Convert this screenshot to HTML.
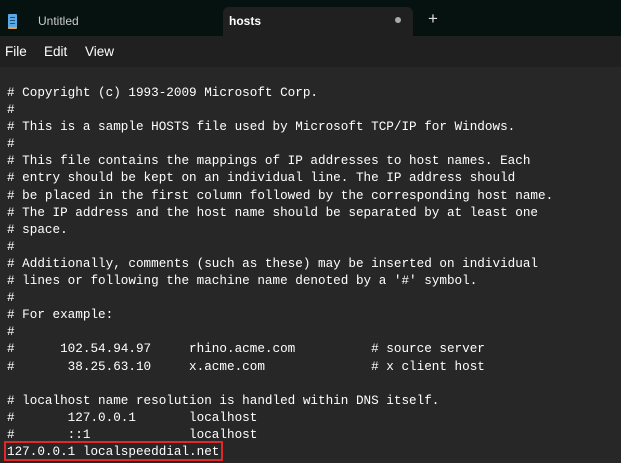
<!DOCTYPE html>
<html><head><style>
body{margin:0;width:621px;height:463px;overflow:hidden;background:#272727;font-family:"Liberation Sans",sans-serif;position:relative}
.tabbar{position:absolute;left:0;top:0;width:621px;height:36px;background:#061210}
.tab{position:absolute;left:223px;top:7px;width:190px;height:29px;background:#202020;border-radius:6px 6px 0 0}
.menu{position:absolute;left:0;top:36px;width:621px;height:31px;background:#202020;color:#fff;font-size:13.5px}
.menu span{position:absolute;top:8px}
pre{position:absolute;left:7px;top:84px;margin:0;font-family:"Liberation Mono",monospace;font-size:12.65px;line-height:17.1px;color:#fff}
.box{position:absolute;left:4px;top:441px;width:215px;height:16px;border:2px solid #e0282a}
</style></head><body>
<div class="tabbar">
<div style="position:absolute;left:8px;top:14px;width:9px;height:13px;background:#5aa9e6;border-radius:1px;border-bottom:2px solid #e8a040"></div>
<div style="position:absolute;left:10px;top:17px;width:5px;height:1px;background:#1c4f80;box-shadow:0 3px #1c4f80,0 6px #1c4f80"></div>
<div style="position:absolute;left:38px;top:14px;color:#ccc;font-size:12px">Untitled</div>
<div class="tab"><div style="position:absolute;left:6px;top:7px;color:#fff;font-size:12px;font-weight:bold">hosts</div>
<div style="position:absolute;left:172px;top:10px;width:6px;height:6px;border-radius:50%;background:#aaa"></div></div>
<div style="position:absolute;left:428px;top:9px;color:#ddd;font-size:17px">+</div>
</div>
<div class="menu"><span style="left:5px">File</span><span style="left:44px">Edit</span><span style="left:85px">View</span></div>
<pre># Copyright (c) 1993-2009 Microsoft Corp.
#
# This is a sample HOSTS file used by Microsoft TCP/IP for Windows.
#
# This file contains the mappings of IP addresses to host names. Each
# entry should be kept on an individual line. The IP address should
# be placed in the first column followed by the corresponding host name.
# The IP address and the host name should be separated by at least one
# space.
#
# Additionally, comments (such as these) may be inserted on individual
# lines or following the machine name denoted by a '#' symbol.
#
# For example:
#
#      102.54.94.97     rhino.acme.com          # source server
#       38.25.63.10     x.acme.com              # x client host

# localhost name resolution is handled within DNS itself.
#       127.0.0.1       localhost
#       ::1             localhost
127.0.0.1 localspeeddial.net</pre>
<div class="box"></div>
</body></html>
